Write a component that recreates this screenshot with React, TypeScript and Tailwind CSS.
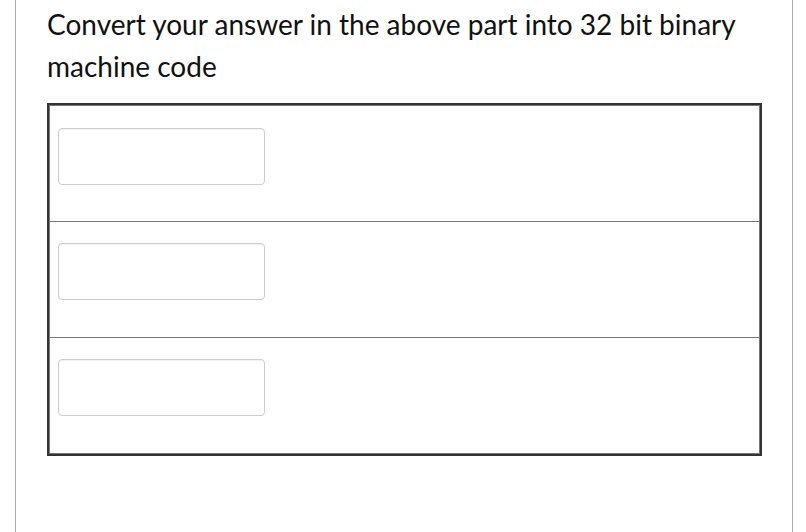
export default function App() {
  const rows = [0, 1, 2];
  return (
    <div className="w-[806px] h-[532px] bg-white overflow-hidden">
      <div className="ml-[15px] w-[778px] h-[532px] border-l border-r border-[#b0b0b0] pl-[31px] pt-[3px]">
        <p
          className="text-[28px] leading-[42px] text-[#111] w-[720px]"
          style={{ fontFamily: "Lato, 'Open Sans', sans-serif" }}
        >
          Convert your answer in the above part into 32 bit binary machine code
        </p>
        <div className="mt-[16px] w-[715px] border-2 border-[#333]">
          {rows.map((r) => (
            <div
              key={r}
              className={`${r === 0 ? "h-[117px] pt-[22px]" : "h-[116px] border-t-0 pt-[21px]"} border border-[#777] pl-[8px]`}
            >
              <div className="w-[207px] h-[57px] rounded-[4px] border border-[#ccc] bg-white shadow-[inset_0_1px_1px_rgba(0,0,0,0.06)]" />
            </div>
          ))}
        </div>
      </div>
    </div>
  );
}
